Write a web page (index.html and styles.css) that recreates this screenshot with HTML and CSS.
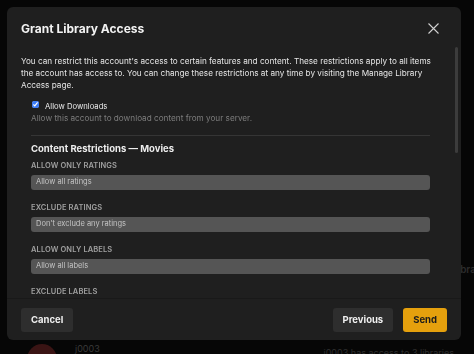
FILE: index.html
```html
<!DOCTYPE html>
<html lang="en">
<head>
    <meta charset="UTF-8">
    <meta name="viewport" content="width=device-width, initial-scale=1.0">
    <title>Grant Library Access</title>
    <link rel="stylesheet" href="styles.css">
</head>
<body>
    <!-- page behind the dialog -->
    <div class="page">
        <div class="row row-lib">
            <span class="lib-text">Library</span>
        </div>
        <div class="row row-user">
            <div class="avatar"></div>
            <span class="uname">j0003</span>
            <span class="udesc">j0003 has access to 3 libraries</span>
        </div>
    </div>

    <div class="modal">
        <div class="modal-header">
            <h2>Grant Library Access</h2>
            <button class="close" aria-label="Close">
                <svg width="11" height="11" viewBox="0 0 11 11">
                    <path d="M0.5 0.5L10.5 10.5M10.5 0.5L0.5 10.5" stroke="#d0d0d0" stroke-width="1.1" fill="none"/>
                </svg>
            </button>
        </div>

        <div class="modal-body">
            <p class="intro">You can restrict this account's access to certain features and content. These restrictions apply to all items the account has access to. You can change these restrictions at any time by visiting the Manage Library Access page.</p>

            <div class="section">
                <label class="check">
                    <input type="checkbox" checked>
                    <span>Allow Downloads</span>
                </label>
                <div class="hint">Allow this account to download content from your server.</div>

                <div class="divider"></div>

                <h3>Content Restrictions — Movies</h3>

                <div class="field">
                    <div class="field-label">Allow Only Ratings</div>
                    <div class="select">Allow all ratings</div>
                </div>
                <div class="field">
                    <div class="field-label">Exclude Ratings</div>
                    <div class="select">Don't exclude any ratings</div>
                </div>
                <div class="field">
                    <div class="field-label">Allow Only Labels</div>
                    <div class="select">Allow all labels</div>
                </div>
                <div class="field">
                    <div class="field-label">Exclude Labels</div>
                </div>
            </div>

            <div class="scrollbar"></div>
        </div>

        <div class="modal-footer">
            <button class="btn">Cancel</button>
            <div class="spacer"></div>
            <button class="btn">Previous</button>
            <button class="btn btn-primary">Send</button>
        </div>
    </div>
</body>
</html>
```

FILE: styles.css
```css
* {
    box-sizing: border-box;
}

body {
    margin: 0;
    background: #060606;
    font-family: Inter, "Liberation Sans", sans-serif;
    color: #fff;
    width: 474px;
    height: 354px;
    overflow: hidden;
}

.page {
    padding-top: 262px;
}

.row {
    display: flex;
    align-items: center;
}

.row-lib {
    height: 14px;
    justify-content: flex-end;
    margin-right: -12px;
}

.lib-text {
    font-size: 10px;
    font-weight: 600;
    color: #2c2c2c;
}

.row-user {
    margin-top: 66px;
    padding-left: 27px;
    height: 26px;
    align-items: flex-start;
}

.avatar {
    width: 30px;
    height: 30px;
    border-radius: 50%;
    background: #3a1414;
    margin-top: 2px;
}

.uname {
    margin-left: 18px;
    margin-top: 1px;
    font-size: 9px;
    color: #3a3a3a;
}

.udesc {
    margin-left: auto;
    margin-right: 20px;
    margin-top: 5px;
    font-size: 9px;
    color: #2e2e2e;
}

.modal {
    position: fixed;
    left: 7px;
    top: 7px;
    width: 454px;
    height: 333px;
    background: #1f1f1f;
    border-radius: 6px;
    display: flex;
    flex-direction: column;
    overflow: hidden;
}

.modal-header {
    height: 38px;
    display: flex;
    align-items: center;
    justify-content: space-between;
    padding: 4px 22px 0 14px;
}

.modal-header h2 {
    margin: 0;
    font-size: 12px;
    font-weight: 700;
    color: #f2f2f2;
}

.close {
    background: none;
    border: none;
    padding: 0;
    display: flex;
    cursor: pointer;
}

.modal-body {
    position: relative;
    flex: 1;
    overflow: hidden;
    padding: 10px 27px 0 14px;
}

.intro {
    margin: 0;
    font-size: 8.2px;
    line-height: 12px;
    color: #e6e6e6;
}

.section {
    padding: 0 4px 0 10px;
}

.check {
    display: flex;
    align-items: center;
    margin-top: 9px;
    height: 12px;
    font-size: 7.7px;
    color: #eaeaea;
}

.check input {
    width: 7px;
    height: 7px;
    margin: 0 6px 3px 1px;
    accent-color: #3b7bf6;
}

.hint {
    font-size: 8.2px;
    line-height: 12px;
    color: #7c7c7c;
}

.divider {
    height: 1px;
    background: #353535;
    margin-top: 11px;
}

h3 {
    margin: 6px 0 0;
    font-size: 9.5px;
    line-height: 14px;
    font-weight: 700;
    color: #ededed;
}

.field {
    margin-top: 4px;
}

.field + .field {
    margin-top: 12px;
}

.field-label {
    font-size: 7.5px;
    line-height: 12px;
    font-weight: 600;
    text-transform: uppercase;
    letter-spacing: 0.1px;
    color: #a0a0a0;
}

.select {
    margin-top: 3px;
    height: 15px;
    border-radius: 3px;
    background: #555555;
    padding: 0 5px;
    font-size: 7.5px;
    line-height: 14px;
    color: #c4c4c4;
}

.scrollbar {
    position: absolute;
    right: 3px;
    top: 2px;
    width: 3px;
    height: 106px;
    border-radius: 2px;
    background: #3c3c3c;
}

.modal-footer {
    height: 42px;
    display: flex;
    align-items: center;
    gap: 10px;
    padding: 0 14px;
    border-top: 1px solid #191919;
}

.spacer {
    flex: 1;
}

.btn {
    height: 24px;
    padding: 0 10px;
    border: none;
    border-radius: 3px;
    background: #2e2e2e;
    color: #f0f0f0;
    font-family: inherit;
    font-size: 9.5px;
    font-weight: 700;
    cursor: pointer;
}

.btn-primary {
    background: #e5a00d;
    color: #1c1c1c;
}
```
